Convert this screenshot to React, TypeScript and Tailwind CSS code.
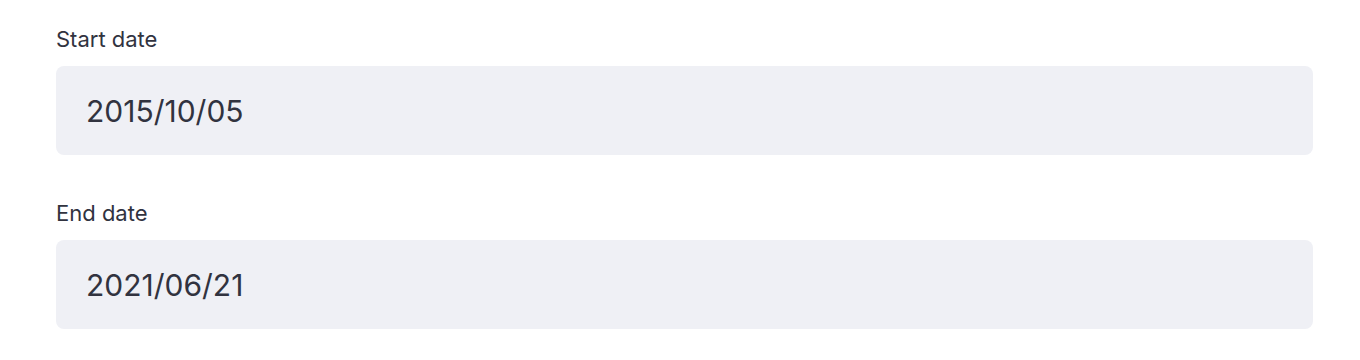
const fields = [
  { label: "Start date", value: "2015/10/05" },
  { label: "End date", value: "2021/06/21" },
];

const App = () => (
  <div className="w-[1360px] h-[360px] bg-white px-[56px] pt-[25px] font-['Inter',sans-serif] text-[#31333f]">
    <div className="w-[1257px] flex flex-col gap-[44px]">
      {fields.map((f) => (
        <div key={f.label} className="flex flex-col">
          <label className="text-[22px] leading-[28px] h-[41px]">{f.label}</label>
          <div className="h-[89px] rounded-[8px] bg-[#eff0f5] flex items-center px-[30px]">
            <span className="text-[30px] leading-none">{f.value}</span>
          </div>
        </div>
      ))}
    </div>
  </div>
);

export default App;
